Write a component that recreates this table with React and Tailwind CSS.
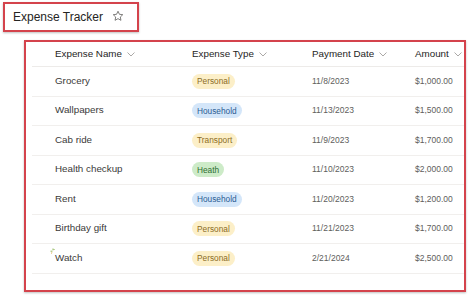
import React from "react";

const rows = [
  { name: "Grocery", type: "Personal", date: "11/8/2023", amount: "$1,000.00" },
  { name: "Wallpapers", type: "Household", date: "11/13/2023", amount: "$1,500.00" },
  { name: "Cab ride", type: "Transport", date: "11/9/2023", amount: "$1,700.00" },
  { name: "Health checkup", type: "Heath", date: "11/10/2023", amount: "$2,000.00" },
  { name: "Rent", type: "Household", date: "11/20/2023", amount: "$1,200.00" },
  { name: "Birthday gift", type: "Personal", date: "11/21/2023", amount: "$1,700.00" },
  { name: "Watch", type: "Personal", date: "2/21/2024", amount: "$2,500.00", isNew: true },
];

const badgeStyles = {
  Personal: "bg-[#fcefc8] text-[#8c6d1f]",
  Transport: "bg-[#fcefc8] text-[#8c6d1f]",
  Household: "bg-[#d4e6f9] text-[#2b5c93]",
  Heath: "bg-[#cdebc8] text-[#2f6e31]",
};

const Chevron = () => (
  <svg width="8" height="5" viewBox="0 0 8 5" className="ml-[5px] mt-[1px]">
    <path d="M0.5 0.5 L4 4 L7.5 0.5" fill="none" stroke="#a19f9d" strokeWidth="0.9" />
  </svg>
);

const Star = () => (
  <svg width="12" height="12" viewBox="0 0 24 24" className="ml-[9px] mb-[2px]">
    <path
      d="M12 2.5l2.9 6.1 6.6.8-4.9 4.6 1.3 6.6L12 17.3l-5.9 3.3 1.3-6.6-4.9-4.6 6.6-.8z"
      fill="none"
      stroke="#605e5c"
      strokeWidth="1.6"
      strokeLinejoin="round"
    />
  </svg>
);

const Sparkle = () => (
  <svg width="6" height="6" viewBox="0 0 6 6" className="absolute left-[-5px] top-[-3px]">
    <path d="M3 0.5 V2.3 M0.5 3.2 H2.3 M4.6 1 L3.6 2" stroke="#7aa83a" strokeWidth="0.8" />
    <path d="M1 5.5 L2.3 4.3" stroke="#d39a2b" strokeWidth="0.8" />
  </svg>
);

const HeaderCell = ({ label }) => (
  <div className="flex items-center whitespace-nowrap">
    <span>{label}</span>
    <Chevron />
  </div>
);

export default function App() {
  return (
    <div className="w-[474px] h-[299px] bg-white font-['Liberation_Sans',Arial,sans-serif] text-[#323130] overflow-hidden">
      <div className="pt-[2px] pl-[3px]">
        <div className="w-[136px] h-[30px] border-2 border-[#d4434c] shadow-[0_1px_2px_rgba(0,0,0,0.25)] flex items-center pl-[8px]">
          <span className="text-[12px] leading-none whitespace-nowrap text-[#252423]">Expense Tracker</span>
          <Star />
        </div>
      </div>

      <div className="ml-[24px] mt-[8px] w-[442px] h-[252px] border-2 border-[#d4434c] shadow-[0_1px_2px_rgba(0,0,0,0.25)]">
        <div className="grid grid-cols-[23px_137px_120px_103px_1fr] h-[25px] items-center text-[9.8px] text-[#252423] border-b border-[#edebe9] ml-[6px]">
          <div />
          <HeaderCell label="Expense Name" />
          <HeaderCell label="Expense Type" />
          <HeaderCell label="Payment Date" />
          <HeaderCell label="Amount" />
        </div>
        {rows.map((r) => (
          <div
            key={r.name}
            className="grid grid-cols-[23px_137px_120px_103px_1fr] h-[29.5px] items-center border-b border-[#f1efed] ml-[6px] text-[9.8px]"
          >
            <div />
            <div className="relative whitespace-nowrap">
              {r.isNew && <Sparkle />}
              <span className="text-[#3b3a39]">{r.name}</span>
            </div>
            <div>
              <span
                className={`inline-flex items-center h-[15px] px-[5px] rounded-full text-[8.3px] ${badgeStyles[r.type]}`}
              >
                {r.type}
              </span>
            </div>
            <div className="text-[8.5px] text-[#605e5c]">{r.date}</div>
            <div className="text-[8.5px] text-[#605e5c]">{r.amount}</div>
          </div>
        ))}
      </div>
    </div>
  );
}
